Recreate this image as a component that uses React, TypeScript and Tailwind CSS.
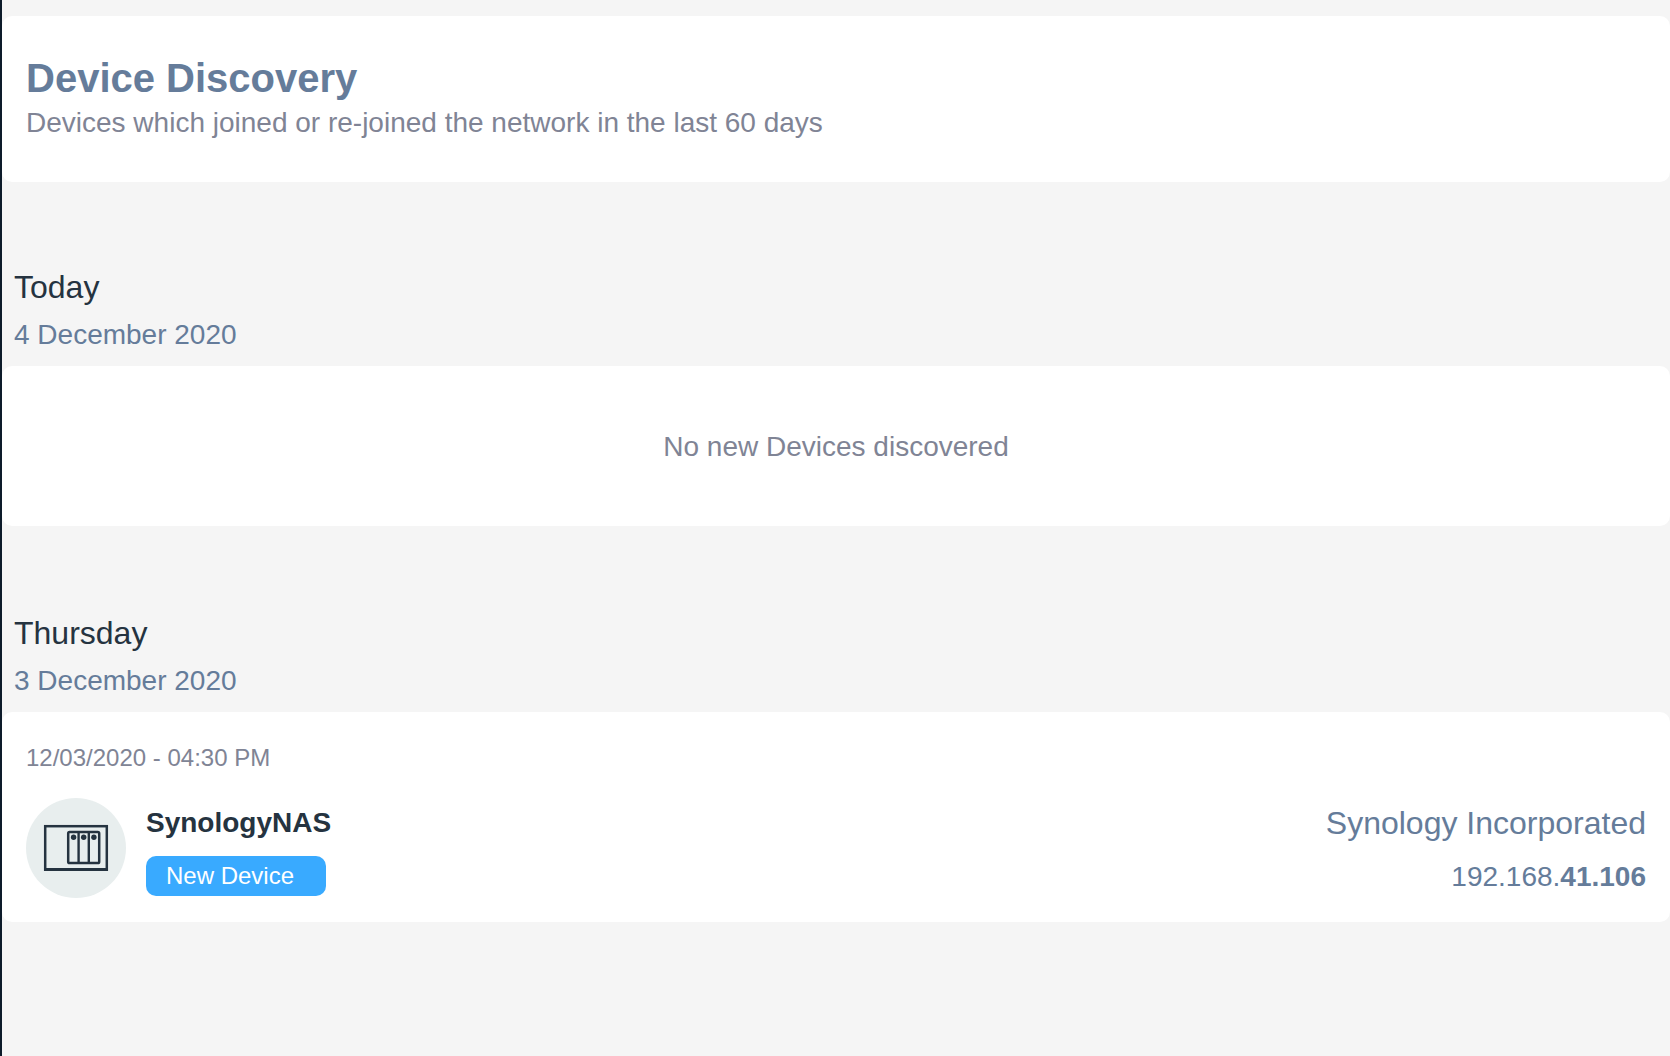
import type { ReactNode } from 'react';

type Device = {
  name: string;
  seenAt: string;
  status: string;
  vendor: string;
  network: string;
  host: string;
};

type Day = {
  label: string;
  date: string;
  devices: Device[];
};

const days: Day[] = [
  { label: 'Today', date: '4 December 2020', devices: [] },
  {
    label: 'Thursday',
    date: '3 December 2020',
    devices: [
      {
        name: 'SynologyNAS',
        seenAt: '12/03/2020 - 04:30 PM',
        status: 'New Device',
        vendor: 'Synology Incorporated',
        network: '192.168.',
        host: '41.106',
      },
    ],
  },
];

function Card({ children, className }: { children: ReactNode; className: string }) {
  return <div className={`rounded-[10px] bg-white px-6 ${className}`}>{children}</div>;
}

function NasIcon() {
  return (
    <svg viewBox="0 0 100 100" className="size-[100px] shrink-0 rounded-full bg-[#e8eeee]" fill="none" stroke="#253340" aria-hidden="true">
      {/* enclosure */}
      <rect x="19.2" y="28.2" width="61.6" height="43.4" strokeWidth="2.5" />
      <path d="M18 71.5H82" strokeWidth="3" />
      {/* drive bays */}
      <rect x="42.2" y="34.1" width="31" height="31" rx="1.4" strokeWidth="2.5" />
      <path d="M52.6 34V65M62.8 34V65" strokeWidth="2.4" />
      <g fill="#253340" stroke="none">
        <circle cx="47.6" cy="39.2" r="2.7" />
        <circle cx="57.7" cy="39.2" r="2.7" />
        <circle cx="67.9" cy="39.2" r="2.7" />
      </g>
    </svg>
  );
}

function DeviceCard({ device }: { device: Device }) {
  return (
    <Card className="pt-[26px] pb-6">
      <time className="mb-5 block text-[24px] leading-[40px] text-[#808495]">{device.seenAt}</time>
      <div className="flex items-start">
        <NasIcon />
        <div className="ml-5 flex flex-col gap-2">
          <h3 className="text-[28px] leading-[50px] font-bold text-[#253340]">{device.name}</h3>
          <span className="w-[180px] rounded-[10px] bg-[#39aaff] px-5 text-[24px] leading-[40px] text-white">{device.status}</span>
        </div>
        <div className="ml-auto flex flex-col gap-2 text-right text-[#657c9a]">
          <p className="text-[32px] leading-[50px]">{device.vendor}</p>
          <p className="text-[28px] leading-[42px]">
            {device.network}
            <b className="font-bold">{device.host}</b>
          </p>
        </div>
      </div>
    </Card>
  );
}

export default function App() {
  return (
    <main className="min-h-screen border-l-2 border-[#0d1b2a] bg-[#f5f5f5] pt-4 pb-10 font-['Liberation_Sans',Arial,sans-serif]">
      <Card className="mb-20 py-[38px]">
        <h1 className="text-[40px] leading-[48px] font-bold text-[#657c9a]">Device Discovery</h1>
        <p className="text-[28px] leading-[42px] text-[#808495]">
          Devices which joined or re-joined the network in the last 60 days
        </p>
      </Card>

      <div className="flex flex-col gap-[82px]">
        {days.map((day) => (
          <section key={day.date}>
            <header className="mb-2 px-3">
              <h2 className="text-[32px] leading-[50px] text-[#253340]">{day.label}</h2>
              <p className="text-[28px] leading-[46px] text-[#657c9a]">{day.date}</p>
            </header>
            {day.devices.length === 0 ? (
              <Card className="pt-[60px] pb-[58px] text-center">
                <p className="text-[28px] leading-[42px] text-[#808495]">No new Devices discovered</p>
              </Card>
            ) : (
              day.devices.map((device) => <DeviceCard key={device.name} device={device} />)
            )}
          </section>
        ))}
      </div>
    </main>
  );
}
